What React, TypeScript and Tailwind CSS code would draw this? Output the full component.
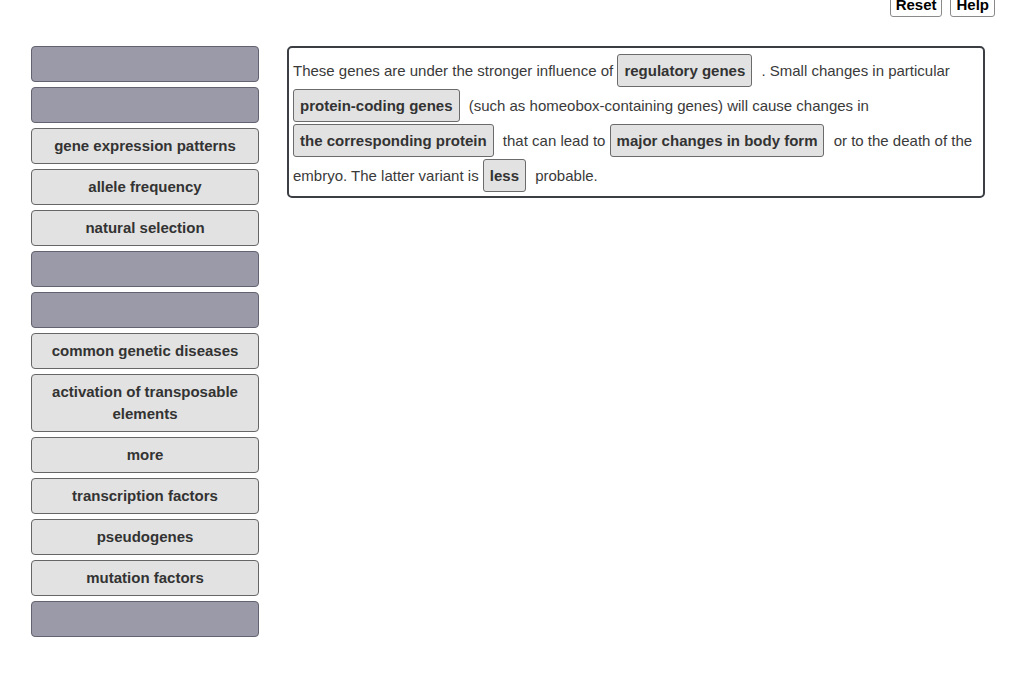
import type { ReactNode } from "react";

const items: (string | null)[] = [
  null,
  null,
  "gene expression patterns",
  "allele frequency",
  "natural selection",
  null,
  null,
  "common genetic diseases",
  "activation of transposable elements",
  "more",
  "transcription factors",
  "pseudogenes",
  "mutation factors",
  null,
];

function Drop({ children }: { children: ReactNode }) {
  return (
    <span className="inline-block align-top mt-[1px] mr-[5px] h-[33px] px-[6px] leading-[31px] border border-[#6b6b6b] rounded-[3px] bg-[#e2e2e2] font-bold text-[#333]">
      {children}
    </span>
  );
}

function Tile({ label }: { label: string | null }) {
  if (!label) {
    return <div className="h-[36px] rounded-[4px] border border-[#626270] bg-[#9b9aa8]" />;
  }
  return (
    <div className="rounded-[4px] border border-[#666] bg-[#e2e2e2] px-[16px] py-[6px] text-center font-bold leading-[22px] text-[#333]">
      {label}
    </div>
  );
}

export default function App() {
  return (
    <div className="min-h-[686px] overflow-hidden bg-white text-[15px] font-['Liberation_Sans',Arial,sans-serif]">
      <div className="-mt-[8px] flex justify-end gap-[8px] pr-[30px]">
        <button className="rounded-[3px] border border-[#8a8a8a] bg-white px-[5px] py-[3px] font-bold leading-[17px] text-black">
          Reset
        </button>
        <button className="rounded-[3px] border border-[#8a8a8a] bg-white px-[5px] py-[3px] font-bold leading-[17px] text-black">
          Help
        </button>
      </div>

      <div className="mt-[29px] flex items-start gap-[28px] pl-[31px]">
        <div className="flex w-[228px] shrink-0 flex-col gap-[5px]">
          {items.map((label, i) => (
            <Tile key={i} label={label} />
          ))}
        </div>

        <div className="w-[698px] rounded-[5px] border-2 border-[#3b3f44] px-[4px] pt-[5px] pb-[3px]">
          <p className="leading-[35px] text-[#3a3a3a]">
            These genes are under the stronger influence of <Drop>regulatory genes</Drop> . Small changes in particular{" "}
            <Drop>protein-coding genes</Drop> (such as homeobox-containing genes) will cause changes in{" "}
            <Drop>the corresponding protein</Drop> that can lead to <Drop>major changes in body form</Drop> or to the death
            of the embryo. The latter variant is <Drop>less</Drop> probable.
          </p>
        </div>
      </div>
    </div>
  );
}
